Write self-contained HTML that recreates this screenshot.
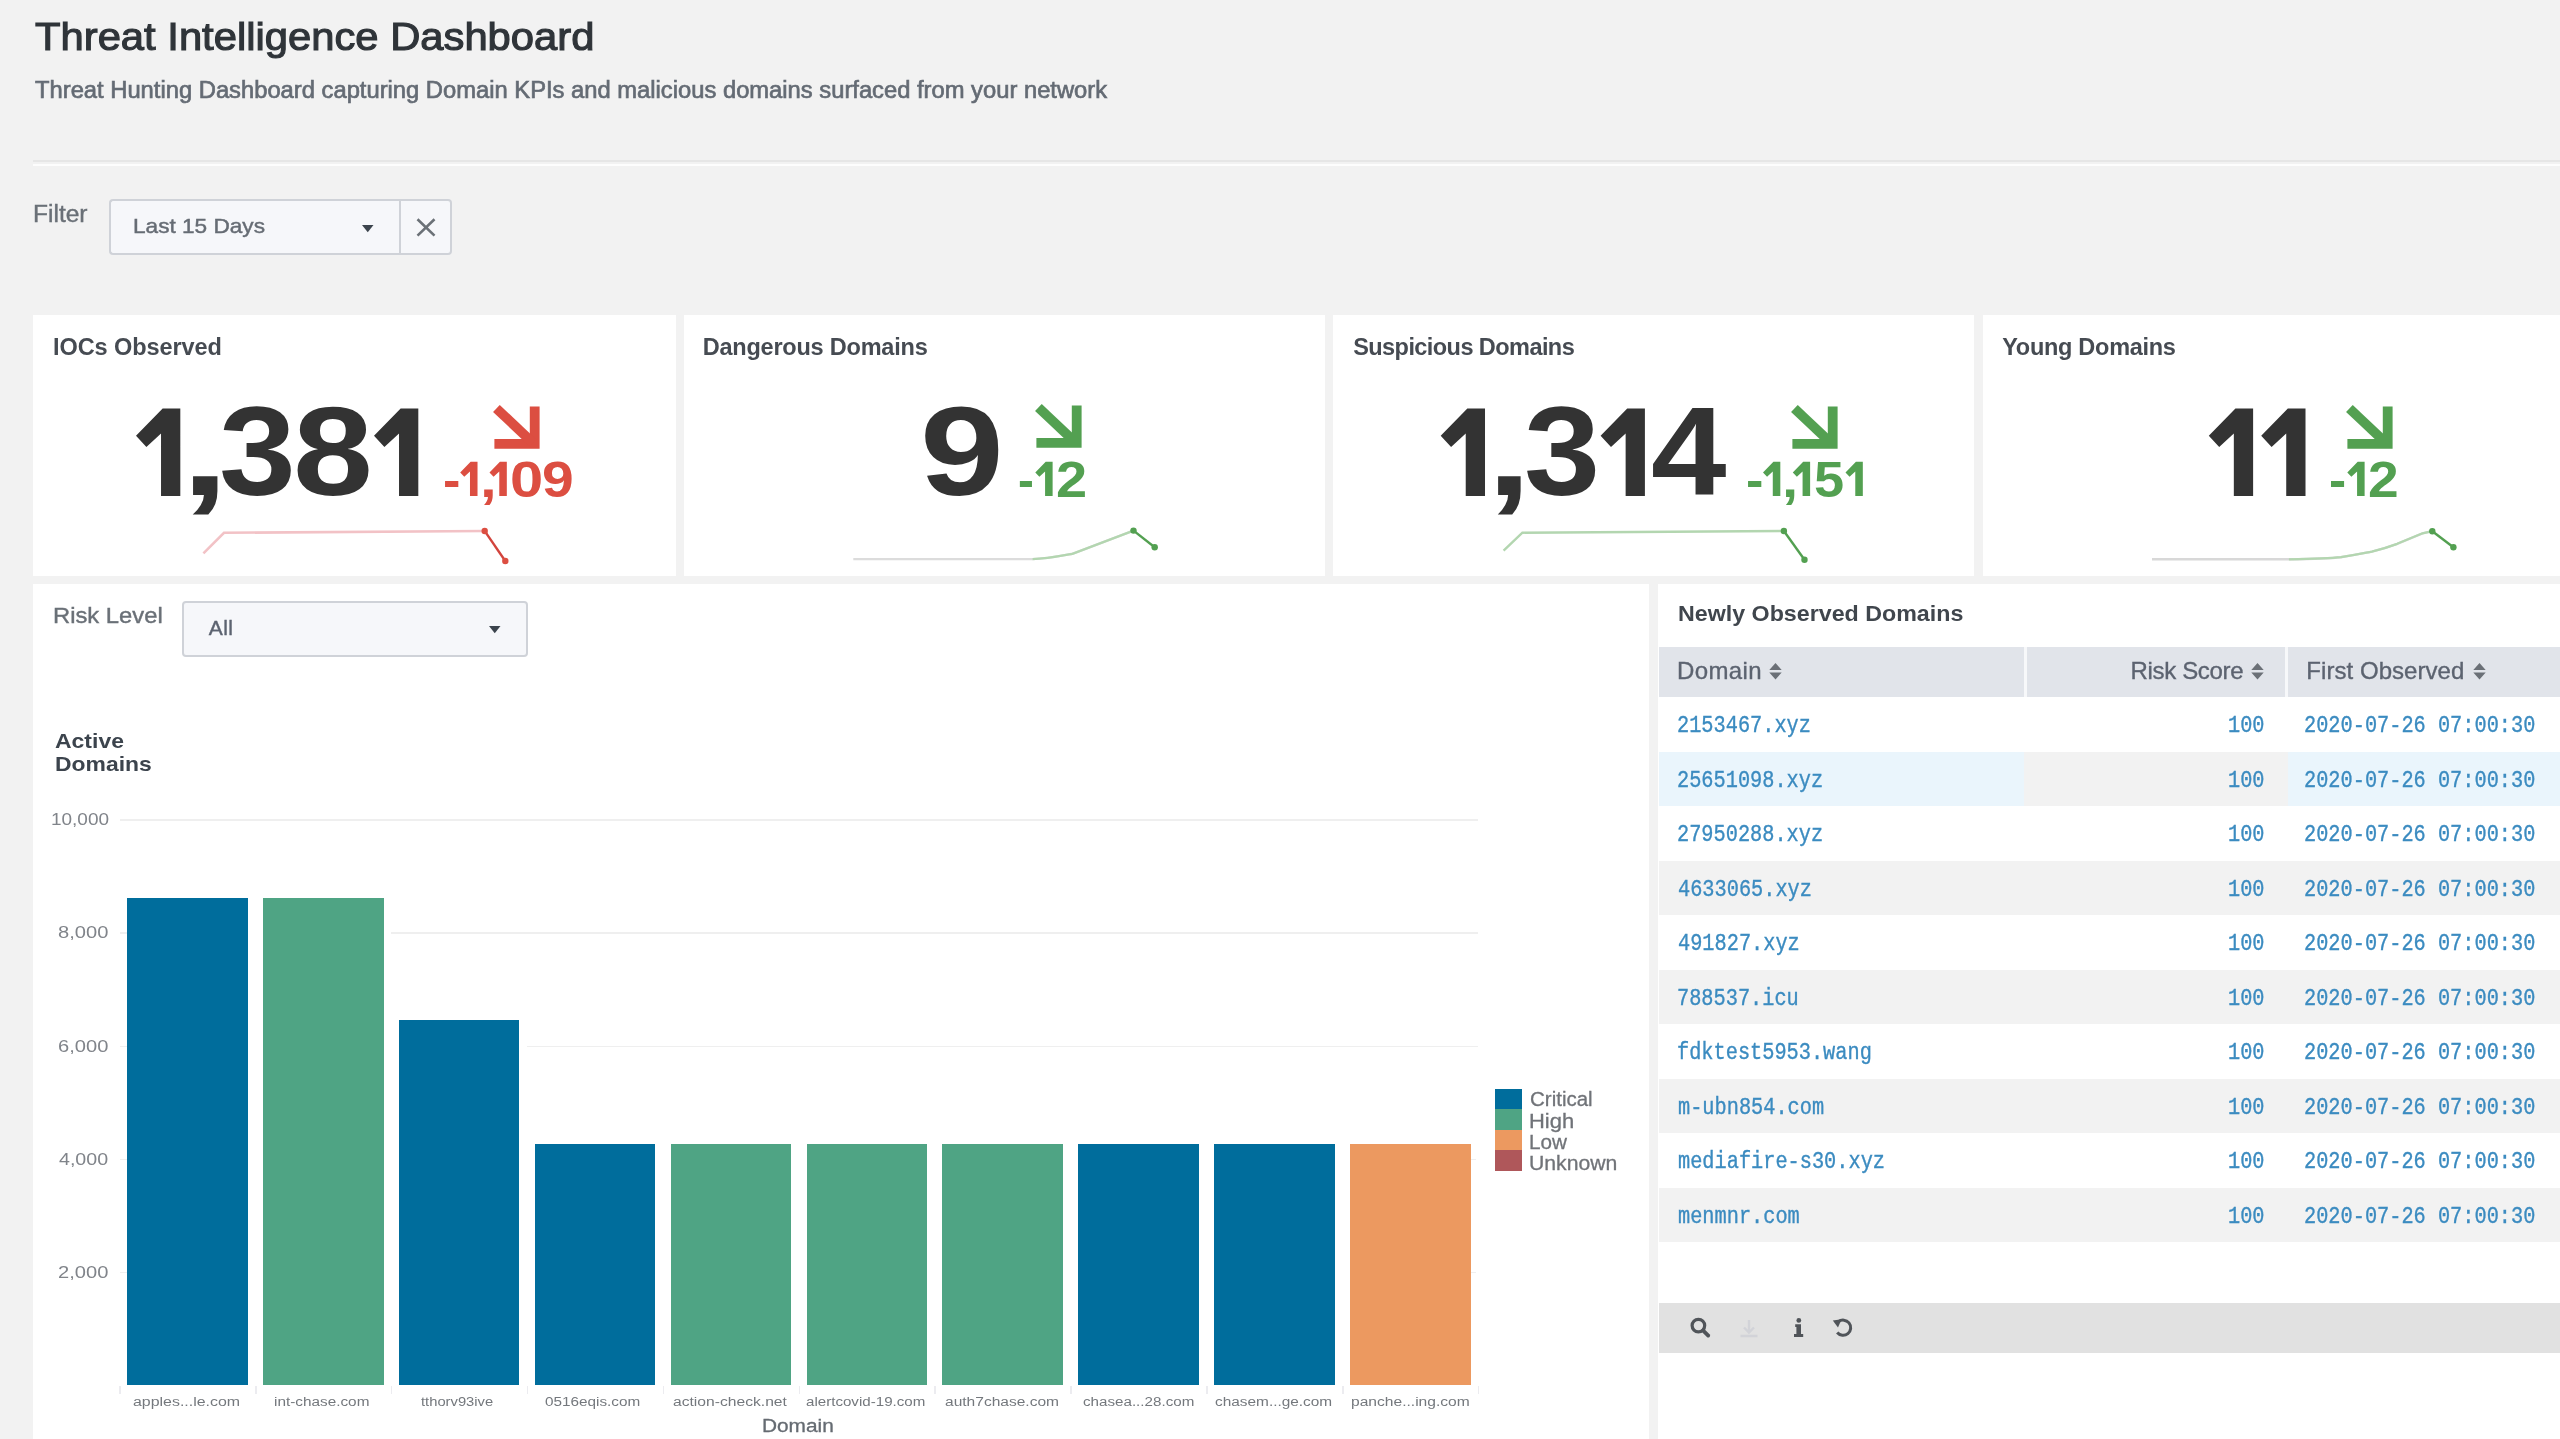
<!DOCTYPE html>
<html>
<head>
<meta charset="utf-8">
<style>
html,body{margin:0;padding:0;background:#f2f2f2;}
#root{position:absolute;left:0;top:0;width:2560px;height:1439px;overflow:hidden;background:#f2f2f2;filter:blur(0.6px);}
body{width:2560px;height:1439px;overflow:hidden;background:#f2f2f2;position:relative;font-family:"Liberation Sans",sans-serif;}
.a{position:absolute;white-space:nowrap;line-height:1;}
.panel{position:absolute;background:#fff;}
svg{position:absolute;overflow:visible;}
</style>
</head>
<body>
<div id="root">
<div style="position:absolute;left:33px;top:159.5px;width:2527px;height:2.2px;background:#e6e6e6;"></div>
<div style="position:absolute;left:33px;top:164px;width:2527px;height:2px;background:#fdfdfd;"></div>
<div style="position:absolute;left:109px;top:199px;width:291px;height:56px;box-sizing:border-box;border:2px solid #cfd2d8;border-right:none;border-radius:4px 0 0 4px;background:#f6f7fa;"></div>
<div style="position:absolute;left:399px;top:199px;width:53px;height:56px;box-sizing:border-box;border:2px solid #cfd2d8;border-radius:0 4px 4px 0;background:#f6f7fa;"></div>
<svg style="left:362px;top:224.5px" width="12" height="8"><path d="M0 0 L11.5 0 L5.75 7.2 Z" fill="#3c444d"/></svg>
<svg style="left:416px;top:217.5px" width="20" height="19"><path d="M1.5 1.2 L18.5 17.6 M18.5 1.2 L1.5 17.6" stroke="#6b7177" stroke-width="2.6" fill="none"/></svg>
<div class="panel" style="left:33px;top:315px;width:643.4px;height:261px;"></div>
<div class="panel" style="left:684.4px;top:315px;width:640.4px;height:261px;"></div>
<div class="panel" style="left:1332.8px;top:315px;width:641.7px;height:261px;"></div>
<div class="panel" style="left:1982.5px;top:315px;width:577.5px;height:261px;"></div>
<svg style="left:0;top:0" width="1" height="1"><polygon points="162.64,408.40 180.31,408.40 180.31,495.90 161.03,495.90 161.03,433.43 146.40,446.95 136.00,435.75" fill="#333333"/></svg>
<svg style="left:0;top:0" width="1" height="1"><polygon points="400.64,408.40 418.31,408.40 418.31,495.90 399.03,495.90 399.03,433.43 384.40,446.95 374.00,435.75" fill="#333333"/></svg>
<svg style="left:0;top:0" width="1" height="1"><polygon points="1467.34,408.40 1485.01,408.40 1485.01,495.90 1465.73,495.90 1465.73,433.43 1451.10,446.95 1440.70,435.75" fill="#333333"/></svg>
<svg style="left:0;top:0" width="1" height="1"><polygon points="1627.24,408.40 1644.91,408.40 1644.91,495.90 1625.63,495.90 1625.63,433.43 1611.00,446.95 1600.60,435.75" fill="#333333"/></svg>
<svg style="left:0;top:0" width="1" height="1"><polygon points="2235.44,408.40 2253.11,408.40 2253.11,495.90 2233.83,495.90 2233.83,433.43 2219.20,446.95 2208.80,435.75" fill="#333333"/></svg>
<svg style="left:0;top:0" width="1" height="1"><polygon points="2287.84,408.40 2305.51,408.40 2305.51,495.90 2286.23,495.90 2286.23,433.43 2271.60,446.95 2261.20,435.75" fill="#333333"/></svg>
<svg style="left:0;top:0" width="1" height="1"><polygon points="470.61,461.80 477.52,461.80 477.52,496.00 469.98,496.00 469.98,471.58 464.26,476.87 460.20,472.49" fill="#dc4e41"/></svg>
<svg style="left:0;top:0" width="1" height="1"><polygon points="499.91,461.80 506.82,461.80 506.82,496.00 499.28,496.00 499.28,471.58 493.56,476.87 489.50,472.49" fill="#dc4e41"/></svg>
<svg style="left:0;top:0" width="1" height="1"><polygon points="1045.71,461.80 1052.62,461.80 1052.62,496.00 1045.08,496.00 1045.08,471.58 1039.36,476.87 1035.30,472.49" fill="#53a051"/></svg>
<svg style="left:0;top:0" width="1" height="1"><polygon points="1773.41,461.80 1780.32,461.80 1780.32,496.00 1772.78,496.00 1772.78,471.58 1767.06,476.87 1763.00,472.49" fill="#53a051"/></svg>
<svg style="left:0;top:0" width="1" height="1"><polygon points="1803.21,461.80 1810.12,461.80 1810.12,496.00 1802.58,496.00 1802.58,471.58 1796.86,476.87 1792.80,472.49" fill="#53a051"/></svg>
<svg style="left:0;top:0" width="1" height="1"><polygon points="1855.91,461.80 1862.82,461.80 1862.82,496.00 1855.28,496.00 1855.28,471.58 1849.56,476.87 1845.50,472.49" fill="#53a051"/></svg>
<svg style="left:0;top:0" width="1" height="1"><polygon points="2357.71,461.80 2364.62,461.80 2364.62,496.00 2357.08,496.00 2357.08,471.58 2351.36,476.87 2347.30,472.49" fill="#53a051"/></svg>
<svg style="left:493.0px;top:404.6px" width="47" height="45"><path d="M1.4 34.1 H46.6 V43.8 H1.4 Z M36.8 1.4 H46.6 V43.8 H36.8 Z" fill="#dc4e41"/><path d="M3.4 3.4 L40 38" stroke="#dc4e41" stroke-width="9.7" fill="none"/></svg>
<svg style="left:1034.6px;top:404.3px" width="47" height="45"><path d="M1.4 34.1 H46.6 V43.8 H1.4 Z M36.8 1.4 H46.6 V43.8 H36.8 Z" fill="#53a051"/><path d="M3.4 3.4 L40 38" stroke="#53a051" stroke-width="9.7" fill="none"/></svg>
<svg style="left:1791.0px;top:404.8px" width="47" height="45"><path d="M1.4 34.1 H46.6 V43.8 H1.4 Z M36.8 1.4 H46.6 V43.8 H36.8 Z" fill="#53a051"/><path d="M3.4 3.4 L40 38" stroke="#53a051" stroke-width="9.7" fill="none"/></svg>
<svg style="left:2346.0px;top:405.0px" width="47" height="45"><path d="M1.4 34.1 H46.6 V43.8 H1.4 Z M36.8 1.4 H46.6 V43.8 H36.8 Z" fill="#53a051"/><path d="M3.4 3.4 L40 38" stroke="#53a051" stroke-width="9.7" fill="none"/></svg>
<svg style="left:0;top:0" width="2560" height="600">
  <polyline points="203.4,553.4 224,532.8 484.7,531" fill="none" stroke="#f2c2c6" stroke-width="2.6"/>
  <line x1="484.7" y1="531" x2="505.3" y2="561" stroke="#d2443d" stroke-width="2.3"/>
  <circle cx="484.7" cy="531" r="3.2" fill="#dc4e41"/><circle cx="505.3" cy="561" r="3.2" fill="#dc4e41"/>
  <path d="M853.3 559.1 L1032.6 559.1 C1045 559 1055 557 1072.4 553.8 L1133.5 530.6" fill="none" stroke="#dcdcdc" stroke-width="2.4"/>
  <path d="M1032.6 559.1 C1045 559 1055 557 1072.4 553.8 L1133.5 530.6" fill="none" stroke="#b3d6b0" stroke-width="2.3"/>
  <line x1="1133.5" y1="530.6" x2="1154.7" y2="547.2" stroke="#53a051" stroke-width="2.4"/>
  <circle cx="1133.5" cy="530.6" r="3.2" fill="#53a051"/><circle cx="1154.7" cy="547.2" r="3.2" fill="#53a051"/>
  <polyline points="1503.6,550.7 1522.4,532.7 1783.9,531" fill="none" stroke="#b3d6b0" stroke-width="2.4"/>
  <line x1="1783.9" y1="531" x2="1804.5" y2="559.7" stroke="#53a051" stroke-width="2.4"/>
  <circle cx="1783.9" cy="531" r="3.2" fill="#53a051"/><circle cx="1804.5" cy="559.7" r="3.2" fill="#53a051"/>
  <path d="M2152 559.3 L2288.9 559.3 C2310 559 2330 558.5 2340.9 557.2 C2355 555 2362 553.5 2371.9 551.6 C2382 549 2390 546.5 2397.2 543.8 L2422.5 533.3 L2432.3 531.2" fill="none" stroke="#d8d8d8" stroke-width="2.4"/>
  <path d="M2288.9 559.3 C2310 559 2330 558.5 2340.9 557.2 C2355 555 2362 553.5 2371.9 551.6 C2382 549 2390 546.5 2397.2 543.8 L2422.5 533.3 L2432.3 531.2" fill="none" stroke="#b3d6b0" stroke-width="2.3"/>
  <line x1="2432.3" y1="531.2" x2="2453.4" y2="547.3" stroke="#53a051" stroke-width="2.4"/>
  <circle cx="2432.3" cy="531.2" r="3.2" fill="#53a051"/><circle cx="2453.4" cy="547.3" r="3.2" fill="#53a051"/>
</svg>
<div class="panel" style="left:33px;top:584px;width:1616px;height:855px;"></div>
<div style="position:absolute;left:182px;top:601px;width:346px;height:56px;box-sizing:border-box;border:2px solid #cfd2d8;border-radius:4px;background:#f6f7fa;"></div>
<svg style="left:489px;top:626px" width="12" height="8"><path d="M0 0 L11.5 0 L5.75 7.2 Z" fill="#3c444d"/></svg>
<div style="position:absolute;left:120px;top:1271.8px;width:7px;height:1.5px;background:#efefef;"></div>
<div style="position:absolute;left:1470px;top:1271.8px;width:6px;height:1.5px;background:#efefef;"></div>
<div style="position:absolute;left:120px;top:1158.7px;width:7px;height:1.5px;background:#efefef;"></div>
<div style="position:absolute;left:1470px;top:1158.7px;width:6px;height:1.5px;background:#efefef;"></div>
<div style="position:absolute;left:120px;top:1045.5px;width:7px;height:1.5px;background:#efefef;"></div>
<div style="position:absolute;left:1470px;top:1045.5px;width:6px;height:1.5px;background:#efefef;"></div>
<div style="position:absolute;left:527.3px;top:1045.5px;width:135.9px;height:1.5px;background:#efefef;"></div>
<div style="position:absolute;left:663.2px;top:1045.5px;width:135.9px;height:1.5px;background:#efefef;"></div>
<div style="position:absolute;left:799.1px;top:1045.5px;width:135.9px;height:1.5px;background:#efefef;"></div>
<div style="position:absolute;left:934.9px;top:1045.5px;width:135.9px;height:1.5px;background:#efefef;"></div>
<div style="position:absolute;left:1070.8px;top:1045.5px;width:135.9px;height:1.5px;background:#efefef;"></div>
<div style="position:absolute;left:1206.7px;top:1045.5px;width:135.9px;height:1.5px;background:#efefef;"></div>
<div style="position:absolute;left:1342.5px;top:1045.5px;width:135.9px;height:1.5px;background:#efefef;"></div>
<div style="position:absolute;left:120px;top:932.4px;width:7px;height:1.5px;background:#efefef;"></div>
<div style="position:absolute;left:1470px;top:932.4px;width:6px;height:1.5px;background:#efefef;"></div>
<div style="position:absolute;left:391.4px;top:932.4px;width:135.9px;height:1.5px;background:#efefef;"></div>
<div style="position:absolute;left:527.3px;top:932.4px;width:135.9px;height:1.5px;background:#efefef;"></div>
<div style="position:absolute;left:663.2px;top:932.4px;width:135.9px;height:1.5px;background:#efefef;"></div>
<div style="position:absolute;left:799.1px;top:932.4px;width:135.9px;height:1.5px;background:#efefef;"></div>
<div style="position:absolute;left:934.9px;top:932.4px;width:135.9px;height:1.5px;background:#efefef;"></div>
<div style="position:absolute;left:1070.8px;top:932.4px;width:135.9px;height:1.5px;background:#efefef;"></div>
<div style="position:absolute;left:1206.7px;top:932.4px;width:135.9px;height:1.5px;background:#efefef;"></div>
<div style="position:absolute;left:1342.5px;top:932.4px;width:135.9px;height:1.5px;background:#efefef;"></div>
<div style="position:absolute;left:120px;top:819.2px;width:7px;height:1.5px;background:#efefef;"></div>
<div style="position:absolute;left:1470px;top:819.2px;width:6px;height:1.5px;background:#efefef;"></div>
<div style="position:absolute;left:119.7px;top:819.2px;width:135.9px;height:1.5px;background:#efefef;"></div>
<div style="position:absolute;left:255.6px;top:819.2px;width:135.9px;height:1.5px;background:#efefef;"></div>
<div style="position:absolute;left:391.4px;top:819.2px;width:135.9px;height:1.5px;background:#efefef;"></div>
<div style="position:absolute;left:527.3px;top:819.2px;width:135.9px;height:1.5px;background:#efefef;"></div>
<div style="position:absolute;left:663.2px;top:819.2px;width:135.9px;height:1.5px;background:#efefef;"></div>
<div style="position:absolute;left:799.1px;top:819.2px;width:135.9px;height:1.5px;background:#efefef;"></div>
<div style="position:absolute;left:934.9px;top:819.2px;width:135.9px;height:1.5px;background:#efefef;"></div>
<div style="position:absolute;left:1070.8px;top:819.2px;width:135.9px;height:1.5px;background:#efefef;"></div>
<div style="position:absolute;left:1206.7px;top:819.2px;width:135.9px;height:1.5px;background:#efefef;"></div>
<div style="position:absolute;left:1342.5px;top:819.2px;width:135.9px;height:1.5px;background:#efefef;"></div>
<div style="position:absolute;left:119.2px;top:1385.5px;width:1.5px;height:8px;background:#ececf0;"></div>
<div style="position:absolute;left:255.1px;top:1385.5px;width:1.5px;height:8px;background:#ececf0;"></div>
<div style="position:absolute;left:390.9px;top:1385.5px;width:1.5px;height:8px;background:#ececf0;"></div>
<div style="position:absolute;left:526.8px;top:1385.5px;width:1.5px;height:8px;background:#ececf0;"></div>
<div style="position:absolute;left:662.7px;top:1385.5px;width:1.5px;height:8px;background:#ececf0;"></div>
<div style="position:absolute;left:798.6px;top:1385.5px;width:1.5px;height:8px;background:#ececf0;"></div>
<div style="position:absolute;left:934.4px;top:1385.5px;width:1.5px;height:8px;background:#ececf0;"></div>
<div style="position:absolute;left:1070.3px;top:1385.5px;width:1.5px;height:8px;background:#ececf0;"></div>
<div style="position:absolute;left:1206.2px;top:1385.5px;width:1.5px;height:8px;background:#ececf0;"></div>
<div style="position:absolute;left:1342.0px;top:1385.5px;width:1.5px;height:8px;background:#ececf0;"></div>
<div style="position:absolute;left:1477.9px;top:1385.5px;width:1.5px;height:8px;background:#ececf0;"></div>
<div style="position:absolute;left:127.2px;top:898.3px;width:120.5px;height:487.2px;background:#006d9c;"></div>
<div style="position:absolute;left:263.1px;top:898.3px;width:120.5px;height:487.2px;background:#4fa484;"></div>
<div style="position:absolute;left:398.9px;top:1020.4px;width:120.5px;height:365.1px;background:#006d9c;"></div>
<div style="position:absolute;left:534.8px;top:1143.7px;width:120.5px;height:241.8px;background:#006d9c;"></div>
<div style="position:absolute;left:670.7px;top:1143.7px;width:120.5px;height:241.8px;background:#4fa484;"></div>
<div style="position:absolute;left:806.6px;top:1143.7px;width:120.5px;height:241.8px;background:#4fa484;"></div>
<div style="position:absolute;left:942.4px;top:1143.7px;width:120.5px;height:241.8px;background:#4fa484;"></div>
<div style="position:absolute;left:1078.3px;top:1143.7px;width:120.5px;height:241.8px;background:#006d9c;"></div>
<div style="position:absolute;left:1214.2px;top:1143.7px;width:120.5px;height:241.8px;background:#006d9c;"></div>
<div style="position:absolute;left:1350.0px;top:1143.7px;width:120.5px;height:241.8px;background:#ec9960;"></div>
<div style="position:absolute;left:1495px;top:1088.5px;width:27px;height:20.6px;background:#006d9c;"></div>
<div style="position:absolute;left:1495px;top:1109.0px;width:27px;height:20.6px;background:#4fa484;"></div>
<div style="position:absolute;left:1495px;top:1129.5px;width:27px;height:20.6px;background:#ec9960;"></div>
<div style="position:absolute;left:1495px;top:1150.0px;width:27px;height:20.6px;background:#af575a;"></div>
<div class="panel" style="left:1658px;top:584px;width:902px;height:855px;"></div>
<div style="position:absolute;left:1659px;top:646.5px;width:901px;height:50.9px;background:#e1e4ea;"></div>
<div style="position:absolute;left:2024px;top:646.5px;width:3px;height:50.9px;background:#f7f8fa;"></div>
<div style="position:absolute;left:2285px;top:646.5px;width:3px;height:50.9px;background:#f7f8fa;"></div>
<svg style="left:1768.8px;top:663px" width="14" height="17"><path d="M0.3 7 L6.5 0 L12.7 7 Z M0.3 9.4 L6.5 16.4 L12.7 9.4 Z" fill="#6b7077"/></svg>
<svg style="left:2250.8px;top:663px" width="14" height="17"><path d="M0.3 7 L6.5 0 L12.7 7 Z M0.3 9.4 L6.5 16.4 L12.7 9.4 Z" fill="#6b7077"/></svg>
<svg style="left:2472.5px;top:663px" width="14" height="17"><path d="M0.3 7 L6.5 0 L12.7 7 Z M0.3 9.4 L6.5 16.4 L12.7 9.4 Z" fill="#6b7077"/></svg>
<div style="position:absolute;left:1659px;top:751.9px;width:365px;height:54.5px;background:#eaf5fc;"></div>
<div style="position:absolute;left:2024px;top:751.9px;width:264px;height:54.5px;background:#f2f2f2;"></div>
<div style="position:absolute;left:2288px;top:751.9px;width:272px;height:54.5px;background:#eaf5fc;"></div>
<div style="position:absolute;left:1659px;top:860.9px;width:901px;height:54.5px;background:#f2f2f2;"></div>
<div style="position:absolute;left:1659px;top:969.8px;width:901px;height:54.5px;background:#f2f2f2;"></div>
<div style="position:absolute;left:1659px;top:1078.8px;width:901px;height:54.5px;background:#f2f2f2;"></div>
<div style="position:absolute;left:1659px;top:1187.8px;width:901px;height:54.5px;background:#f2f2f2;"></div>
<div style="position:absolute;left:1659px;top:1303.4px;width:901px;height:50.1px;background:#e1e1e1;"></div>
<svg style="left:0;top:0" width="1" height="1">
<circle cx="1698.4" cy="1325.6" r="6.3" stroke="#505459" stroke-width="3.2" fill="none"/>
<path d="M1703.2 1330.6 L1708.2 1335.6" stroke="#505459" stroke-width="3.8" stroke-linecap="round"/>
<path d="M1749 1320 V1332 M1744 1327.5 L1749 1332.5 L1754 1327.5 M1740.5 1336 H1757.5" stroke="#d2d3d8" stroke-width="2.4" fill="none"/>
<circle cx="1798.8" cy="1320.4" r="2.4" fill="#505459"/>
<path d="M1795.2 1324.2 H1801 V1334 H1803.2 V1337 H1794 V1334 H1796.4 V1327 H1795.2 Z" fill="#505459"/>
<path d="M1837.2 1332.5 A7.6 7.6 0 1 0 1838.3 1321.8" stroke="#505459" stroke-width="3" fill="none"/>
<path d="M1832.8 1320.5 L1841.6 1319.3 L1838 1327.6 Z" fill="#505459"/>
</svg>
<div class="a" style="left:35.00px;top:17.50px;font-size:38.5px;-webkit-text-stroke:1.1px #2f3439;color:#2f3439;transform:scaleX(1.0846);transform-origin:0 0;">Threat Intelligence Dashboard</div>
<div class="a" style="left:35.00px;top:78.70px;font-size:23px;-webkit-text-stroke:0.65px #646b74;color:#646b74;transform:scaleX(1.0328);transform-origin:0 0;">Threat Hunting Dashboard capturing Domain KPIs and malicious domains surfaced from your network</div>
<div class="a" style="left:32.87px;top:202.60px;font-size:23px;-webkit-text-stroke:0.4px #6a7077;color:#6a7077;transform:scaleX(1.0673);transform-origin:0 0;">Filter</div>
<div class="a" style="left:132.65px;top:215.30px;font-size:21px;-webkit-text-stroke:0.45px #666c74;color:#666c74;transform:scaleX(1.0767);transform-origin:0 0;">Last 15 Days</div>
<div class="a" style="left:53.00px;top:335.70px;font-weight:bold;font-size:23.5px;letter-spacing:-0.083px;color:#464b52;">IOCs Observed</div>
<div class="a" style="left:702.70px;top:335.70px;font-weight:bold;font-size:23.5px;letter-spacing:-0.219px;color:#464b52;">Dangerous Domains</div>
<div class="a" style="left:1353.20px;top:335.70px;font-weight:bold;font-size:23.5px;letter-spacing:-0.565px;color:#464b52;">Suspicious Domains</div>
<div class="a" style="left:2002.20px;top:335.70px;font-weight:bold;font-size:23.5px;letter-spacing:-0.283px;color:#464b52;">Young Domains</div>
<div class="a" style="left:180.75px;top:388.40px;font-weight:bold;font-size:126.81px;color:#333333;transform:scaleX(1.3611);transform-origin:0 0;">,</div>
<div class="a" style="left:218.73px;top:388.40px;font-weight:bold;font-size:126.81px;color:#333333;transform:scaleX(1.0889);transform-origin:0 0;">3</div>
<div class="a" style="left:293.47px;top:388.40px;font-weight:bold;font-size:126.81px;color:#333333;transform:scaleX(1.1333);transform-origin:0 0;">8</div>
<div class="a" style="left:920.05px;top:388.40px;font-weight:bold;font-size:126.81px;color:#333333;transform:scaleX(1.1887);transform-origin:0 0;">9</div>
<div class="a" style="left:1486.70px;top:388.40px;font-weight:bold;font-size:126.81px;color:#333333;transform:scaleX(1.2556);transform-origin:0 0;">,</div>
<div class="a" style="left:1523.76px;top:388.40px;font-weight:bold;font-size:126.81px;color:#333333;transform:scaleX(1.0794);transform-origin:0 0;">3</div>
<div class="a" style="left:1651.46px;top:388.40px;font-weight:bold;font-size:126.81px;color:#333333;transform:scaleX(1.0706);transform-origin:0 0;">4</div>
<div class="a" style="left:442.79px;top:455.80px;font-weight:bold;font-size:49.57px;color:#dc4e41;transform:scaleX(1.0538);transform-origin:0 0;">-</div>
<div class="a" style="left:479.56px;top:455.80px;font-weight:bold;font-size:49.57px;color:#dc4e41;transform:scaleX(1.2143);transform-origin:0 0;">,</div>
<div class="a" style="left:510.29px;top:455.80px;font-weight:bold;font-size:49.57px;color:#dc4e41;transform:scaleX(1.2043);transform-origin:0 0;">0</div>
<div class="a" style="left:542.40px;top:455.80px;font-weight:bold;font-size:49.57px;color:#dc4e41;transform:scaleX(1.1500);transform-origin:0 0;">9</div>
<div class="a" style="left:1018.08px;top:455.80px;font-weight:bold;font-size:49.57px;color:#53a051;transform:scaleX(0.9615);transform-origin:0 0;">-</div>
<div class="a" style="left:1055.94px;top:455.80px;font-weight:bold;font-size:49.57px;color:#53a051;transform:scaleX(1.1292);transform-origin:0 0;">2</div>
<div class="a" style="left:1745.79px;top:455.80px;font-weight:bold;font-size:49.57px;color:#53a051;transform:scaleX(1.0538);transform-origin:0 0;">-</div>
<div class="a" style="left:1782.39px;top:455.80px;font-weight:bold;font-size:49.57px;color:#53a051;transform:scaleX(1.1714);transform-origin:0 0;">,</div>
<div class="a" style="left:1814.42px;top:455.80px;font-weight:bold;font-size:49.57px;color:#53a051;transform:scaleX(1.0917);transform-origin:0 0;">5</div>
<div class="a" style="left:2328.92px;top:455.80px;font-weight:bold;font-size:49.57px;color:#53a051;transform:scaleX(1.0385);transform-origin:0 0;">-</div>
<div class="a" style="left:2368.28px;top:455.80px;font-weight:bold;font-size:49.57px;color:#53a051;transform:scaleX(1.1125);transform-origin:0 0;">2</div>
<div class="a" style="left:53.34px;top:605.30px;font-size:22px;-webkit-text-stroke:0.4px #6a7077;color:#6a7077;transform:scaleX(1.0806);transform-origin:0 0;">Risk Level</div>
<div class="a" style="left:208.70px;top:617.00px;font-size:21px;letter-spacing:0.5px;-webkit-text-stroke:0.4px #5c6370;color:#5c6370;">All</div>
<div class="a" style="left:54.68px;top:731.00px;font-weight:bold;font-size:20.5px;color:#3c444d;transform:scaleX(1.1200);transform-origin:0 0;">Active</div>
<div class="a" style="left:54.68px;top:753.70px;font-weight:bold;font-size:20.5px;color:#3c444d;transform:scaleX(1.1176);transform-origin:0 0;">Domains</div>
<div class="a" style="left:57.82px;top:1263.94px;font-size:17px;color:#80848a;transform:scaleX(1.1829);transform-origin:0 0;">2,000</div>
<div class="a" style="left:59.00px;top:1150.78px;font-size:17px;color:#80848a;transform:scaleX(1.1548);transform-origin:0 0;">4,000</div>
<div class="a" style="left:57.82px;top:1037.62px;font-size:17px;color:#80848a;transform:scaleX(1.1829);transform-origin:0 0;">6,000</div>
<div class="a" style="left:57.82px;top:924.46px;font-size:17px;color:#80848a;transform:scaleX(1.1829);transform-origin:0 0;">8,000</div>
<div class="a" style="left:50.58px;top:811.30px;font-size:17px;color:#80848a;transform:scaleX(1.1160);transform-origin:0 0;">10,000</div>
<div class="a" style="left:133.03px;top:1395.50px;font-size:12.5px;color:#74787d;transform:scaleX(1.2744);transform-origin:0 0;">apples...le.com</div>
<div class="a" style="left:273.77px;top:1395.50px;font-size:12.5px;color:#74787d;transform:scaleX(1.2263);transform-origin:0 0;">int-chase.com</div>
<div class="a" style="left:421.30px;top:1395.50px;font-size:12.5px;color:#74787d;transform:scaleX(1.1803);transform-origin:0 0;">tthorv93ive</div>
<div class="a" style="left:545.38px;top:1395.50px;font-size:12.5px;color:#74787d;transform:scaleX(1.2237);transform-origin:0 0;">0516eqis.com</div>
<div class="a" style="left:672.65px;top:1395.50px;font-size:12.5px;color:#74787d;transform:scaleX(1.2511);transform-origin:0 0;">action-check.net</div>
<div class="a" style="left:806.29px;top:1395.50px;font-size:12.5px;color:#74787d;transform:scaleX(1.2093);transform-origin:0 0;">alertcovid-19.com</div>
<div class="a" style="left:945.06px;top:1395.50px;font-size:12.5px;color:#74787d;transform:scaleX(1.2433);transform-origin:0 0;">auth7chase.com</div>
<div class="a" style="left:1082.59px;top:1395.50px;font-size:12.5px;color:#74787d;transform:scaleX(1.2133);transform-origin:0 0;">chasea...28.com</div>
<div class="a" style="left:1214.67px;top:1395.50px;font-size:12.5px;color:#74787d;transform:scaleX(1.2312);transform-origin:0 0;">chasem...ge.com</div>
<div class="a" style="left:1350.75px;top:1395.50px;font-size:12.5px;color:#74787d;transform:scaleX(1.2473);transform-origin:0 0;">panche...ing.com</div>
<div class="a" style="left:762.24px;top:1416.80px;font-size:18px;-webkit-text-stroke:0.3px #656b72;color:#656b72;transform:scaleX(1.1567);transform-origin:0 0;">Domain</div>
<div class="a" style="left:1530.37px;top:1089.30px;font-size:20px;-webkit-text-stroke:0.3px #707378;color:#707378;transform:scaleX(1.0254);transform-origin:0 0;">Critical</div>
<div class="a" style="left:1529.21px;top:1111.30px;font-size:20px;-webkit-text-stroke:0.3px #707378;color:#707378;transform:scaleX(1.0974);transform-origin:0 0;">High</div>
<div class="a" style="left:1529.33px;top:1132.30px;font-size:20px;-webkit-text-stroke:0.3px #707378;color:#707378;transform:scaleX(1.0343);transform-origin:0 0;">Low</div>
<div class="a" style="left:1529.28px;top:1152.50px;font-size:20px;-webkit-text-stroke:0.3px #707378;color:#707378;transform:scaleX(1.0600);transform-origin:0 0;">Unknown</div>
<div class="a" style="left:1677.63px;top:602.50px;font-weight:bold;font-size:22.5px;color:#40464d;transform:scaleX(1.0326);transform-origin:0 0;">Newly Observed Domains</div>
<div class="a" style="left:1677.10px;top:659.00px;font-size:24px;-webkit-text-stroke:0.35px #5c6370;letter-spacing:0.360px;color:#5c6370;">Domain</div>
<div class="a" style="left:2130.50px;top:659.00px;font-size:24px;-webkit-text-stroke:0.35px #5c6370;letter-spacing:-0.333px;color:#5c6370;">Risk Score</div>
<div class="a" style="left:2306.30px;top:659.00px;font-size:24px;-webkit-text-stroke:0.35px #5c6370;letter-spacing:0.054px;color:#5c6370;">First Observed</div>
<div class="a" style="left:1677.44px;top:715.40px;font-family:'Liberation Mono',monospace;font-size:23px;-webkit-text-stroke:0.35px #3b8bc0;color:#3b8bc0;transform:scaleX(0.8822);transform-origin:0 0;">2153467.xyz</div>
<div class="a" style="left:2228.01px;top:715.40px;font-family:'Liberation Mono',monospace;font-size:23px;-webkit-text-stroke:0.35px #3b8bc0;color:#3b8bc0;transform:scaleX(0.8822);transform-origin:0 0;">100</div>
<div class="a" style="left:2304.44px;top:715.40px;font-family:'Liberation Mono',monospace;font-size:23px;-webkit-text-stroke:0.35px #3b8bc0;color:#3b8bc0;transform:scaleX(0.8822);transform-origin:0 0;">2020-07-26 07:00:30</div>
<div class="a" style="left:1677.44px;top:769.89px;font-family:'Liberation Mono',monospace;font-size:23px;-webkit-text-stroke:0.35px #3b8bc0;color:#3b8bc0;transform:scaleX(0.8822);transform-origin:0 0;">25651098.xyz</div>
<div class="a" style="left:2228.01px;top:769.89px;font-family:'Liberation Mono',monospace;font-size:23px;-webkit-text-stroke:0.35px #3b8bc0;color:#3b8bc0;transform:scaleX(0.8822);transform-origin:0 0;">100</div>
<div class="a" style="left:2304.44px;top:769.89px;font-family:'Liberation Mono',monospace;font-size:23px;-webkit-text-stroke:0.35px #3b8bc0;color:#3b8bc0;transform:scaleX(0.8822);transform-origin:0 0;">2020-07-26 07:00:30</div>
<div class="a" style="left:1677.44px;top:824.38px;font-family:'Liberation Mono',monospace;font-size:23px;-webkit-text-stroke:0.35px #3b8bc0;color:#3b8bc0;transform:scaleX(0.8822);transform-origin:0 0;">27950288.xyz</div>
<div class="a" style="left:2228.01px;top:824.38px;font-family:'Liberation Mono',monospace;font-size:23px;-webkit-text-stroke:0.35px #3b8bc0;color:#3b8bc0;transform:scaleX(0.8822);transform-origin:0 0;">100</div>
<div class="a" style="left:2304.44px;top:824.38px;font-family:'Liberation Mono',monospace;font-size:23px;-webkit-text-stroke:0.35px #3b8bc0;color:#3b8bc0;transform:scaleX(0.8822);transform-origin:0 0;">2020-07-26 07:00:30</div>
<div class="a" style="left:1678.32px;top:878.87px;font-family:'Liberation Mono',monospace;font-size:23px;-webkit-text-stroke:0.35px #3b8bc0;color:#3b8bc0;transform:scaleX(0.8822);transform-origin:0 0;">4633065.xyz</div>
<div class="a" style="left:2228.01px;top:878.87px;font-family:'Liberation Mono',monospace;font-size:23px;-webkit-text-stroke:0.35px #3b8bc0;color:#3b8bc0;transform:scaleX(0.8822);transform-origin:0 0;">100</div>
<div class="a" style="left:2304.44px;top:878.87px;font-family:'Liberation Mono',monospace;font-size:23px;-webkit-text-stroke:0.35px #3b8bc0;color:#3b8bc0;transform:scaleX(0.8822);transform-origin:0 0;">2020-07-26 07:00:30</div>
<div class="a" style="left:1678.32px;top:933.36px;font-family:'Liberation Mono',monospace;font-size:23px;-webkit-text-stroke:0.35px #3b8bc0;color:#3b8bc0;transform:scaleX(0.8822);transform-origin:0 0;">491827.xyz</div>
<div class="a" style="left:2228.01px;top:933.36px;font-family:'Liberation Mono',monospace;font-size:23px;-webkit-text-stroke:0.35px #3b8bc0;color:#3b8bc0;transform:scaleX(0.8822);transform-origin:0 0;">100</div>
<div class="a" style="left:2304.44px;top:933.36px;font-family:'Liberation Mono',monospace;font-size:23px;-webkit-text-stroke:0.35px #3b8bc0;color:#3b8bc0;transform:scaleX(0.8822);transform-origin:0 0;">2020-07-26 07:00:30</div>
<div class="a" style="left:1677.44px;top:987.85px;font-family:'Liberation Mono',monospace;font-size:23px;-webkit-text-stroke:0.35px #3b8bc0;color:#3b8bc0;transform:scaleX(0.8822);transform-origin:0 0;">788537.icu</div>
<div class="a" style="left:2228.01px;top:987.85px;font-family:'Liberation Mono',monospace;font-size:23px;-webkit-text-stroke:0.35px #3b8bc0;color:#3b8bc0;transform:scaleX(0.8822);transform-origin:0 0;">100</div>
<div class="a" style="left:2304.44px;top:987.85px;font-family:'Liberation Mono',monospace;font-size:23px;-webkit-text-stroke:0.35px #3b8bc0;color:#3b8bc0;transform:scaleX(0.8822);transform-origin:0 0;">2020-07-26 07:00:30</div>
<div class="a" style="left:1677.44px;top:1042.34px;font-family:'Liberation Mono',monospace;font-size:23px;-webkit-text-stroke:0.35px #3b8bc0;color:#3b8bc0;transform:scaleX(0.8822);transform-origin:0 0;">fdktest5953.wang</div>
<div class="a" style="left:2228.01px;top:1042.34px;font-family:'Liberation Mono',monospace;font-size:23px;-webkit-text-stroke:0.35px #3b8bc0;color:#3b8bc0;transform:scaleX(0.8822);transform-origin:0 0;">100</div>
<div class="a" style="left:2304.44px;top:1042.34px;font-family:'Liberation Mono',monospace;font-size:23px;-webkit-text-stroke:0.35px #3b8bc0;color:#3b8bc0;transform:scaleX(0.8822);transform-origin:0 0;">2020-07-26 07:00:30</div>
<div class="a" style="left:1678.32px;top:1096.83px;font-family:'Liberation Mono',monospace;font-size:23px;-webkit-text-stroke:0.35px #3b8bc0;color:#3b8bc0;transform:scaleX(0.8822);transform-origin:0 0;">m-ubn854.com</div>
<div class="a" style="left:2228.01px;top:1096.83px;font-family:'Liberation Mono',monospace;font-size:23px;-webkit-text-stroke:0.35px #3b8bc0;color:#3b8bc0;transform:scaleX(0.8822);transform-origin:0 0;">100</div>
<div class="a" style="left:2304.44px;top:1096.83px;font-family:'Liberation Mono',monospace;font-size:23px;-webkit-text-stroke:0.35px #3b8bc0;color:#3b8bc0;transform:scaleX(0.8822);transform-origin:0 0;">2020-07-26 07:00:30</div>
<div class="a" style="left:1678.32px;top:1151.32px;font-family:'Liberation Mono',monospace;font-size:23px;-webkit-text-stroke:0.35px #3b8bc0;color:#3b8bc0;transform:scaleX(0.8822);transform-origin:0 0;">mediafire-s30.xyz</div>
<div class="a" style="left:2228.01px;top:1151.32px;font-family:'Liberation Mono',monospace;font-size:23px;-webkit-text-stroke:0.35px #3b8bc0;color:#3b8bc0;transform:scaleX(0.8822);transform-origin:0 0;">100</div>
<div class="a" style="left:2304.44px;top:1151.32px;font-family:'Liberation Mono',monospace;font-size:23px;-webkit-text-stroke:0.35px #3b8bc0;color:#3b8bc0;transform:scaleX(0.8822);transform-origin:0 0;">2020-07-26 07:00:30</div>
<div class="a" style="left:1678.32px;top:1205.81px;font-family:'Liberation Mono',monospace;font-size:23px;-webkit-text-stroke:0.35px #3b8bc0;color:#3b8bc0;transform:scaleX(0.8822);transform-origin:0 0;">menmnr.com</div>
<div class="a" style="left:2228.01px;top:1205.81px;font-family:'Liberation Mono',monospace;font-size:23px;-webkit-text-stroke:0.35px #3b8bc0;color:#3b8bc0;transform:scaleX(0.8822);transform-origin:0 0;">100</div>
<div class="a" style="left:2304.44px;top:1205.81px;font-family:'Liberation Mono',monospace;font-size:23px;-webkit-text-stroke:0.35px #3b8bc0;color:#3b8bc0;transform:scaleX(0.8822);transform-origin:0 0;">2020-07-26 07:00:30</div>
</div>
</body>
</html>
